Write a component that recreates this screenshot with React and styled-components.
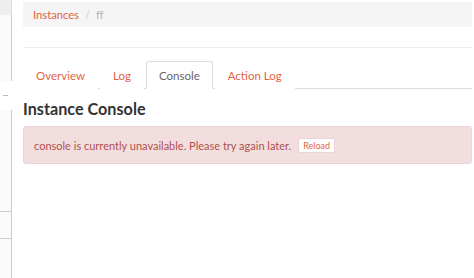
import React from "react";
import styled, { createGlobalStyle } from "styled-components";

const Global = createGlobalStyle`
  html, body {
    margin: 0;
    padding: 0;
    background: #fff;
  }
  body {
    font-family: Lato, "Noto Sans", sans-serif;
    font-size: 11px;
    color: #333;
  }
`;

const Page = styled.div`
  display: flex;
  width: 474px;
  height: 278px;
  overflow: hidden;
`;

const Side = styled.div`
  width: 12px;
  flex: none;
  display: flex;
  flex-direction: column;
`;

const SideTop = styled.div`
  height: 15px;
  background: #eee;
  border-right: 1px solid #ddd;
`;

const SidePanel = styled.div`
  height: ${p => p.h}px;
  background: #fafafa;
  border-right: 1px solid #ccc;
  flex: ${p => (p.grow ? 1 : "none")};
  display: flex;
  flex-direction: column;
`;

const SideGap = styled.div`
  height: 29px;
  display: flex;
  align-items: center;
  padding-left: 3px;
  &::before {
    content: "";
    width: 5px;
    height: 1px;
    background: #bbb;
  }
`;

const SideRule = styled.div`
  height: ${p => p.h}px;
  border-bottom: 1px solid #ccc;
`;

const Main = styled.div`
  flex: 1;
  padding: 2px 2px 0 11px;
  display: flex;
  flex-direction: column;
`;

const Crumbs = styled.ol`
  margin: 0;
  list-style: none;
  height: 25px;
  padding: 0 10px;
  background: #f5f5f5;
  display: flex;
  align-items: center;
  gap: 6px;
  font-size: 11.2px;
`;

const Crumb = styled.li`
  color: ${p => (p.active ? "#b5b5b5" : "#e2643e")};
`;

const Sep = styled.li`
  color: #d0d0d0;
`;

const Rule = styled.hr`
  margin: 20px 0 13px;
  border: 0;
  border-top: 1px solid #eee;
`;

const Tabs = styled.ul`
  margin: 0;
  padding: 0;
  list-style: none;
  display: flex;
  border-bottom: 1px solid #ddd;
  font-size: 11.5px;
`;

const Tab = styled.li`
  height: 26px;
  padding: 0 12px;
  margin-right: 2px;
  display: flex;
  align-items: center;
  margin-bottom: -1px;
  border: 1px solid ${p => (p.active ? "#ddd" : "transparent")};
  border-bottom-color: ${p => (p.active ? "#fff" : "transparent")};
  border-radius: 3px 3px 0 0;
  background: #fff;
  color: ${p => (p.active ? "#666" : "#e2643e")};
`;

const Title = styled.h3`
  margin: 9px 0 6px;
  font-size: 16.2px;
  font-weight: 700;
  color: #333;
  line-height: 22px;
`;

const Alert = styled.div`
  height: 38px;
  box-sizing: border-box;
  padding: 0 10px;
  background: #f2dede;
  border: 1px solid #ebd3d6;
  border-radius: 3px;
  color: #b0514e;
  display: flex;
  align-items: center;
  gap: 7px;
`;

const Reload = styled.button`
  font: inherit;
  font-size: 9px;
  height: 15px;
  padding: 0 4px;
  background: #fff;
  border: 1px solid #ebd3d6;
  border-radius: 2px;
  color: #e2643e;
  display: flex;
  align-items: center;
`;

export default function App() {
  return (
    <Page>
      <Global />
      <Side>
        <SideTop />
        <SidePanel h={66} />
        <SideGap />
        <SidePanel grow>
          <SideRule h={101} />
          <SideRule h={26} />
        </SidePanel>
      </Side>
      <Main>
        <Crumbs>
          <Crumb>Instances</Crumb>
          <Sep>/</Sep>
          <Crumb active>ff</Crumb>
        </Crumbs>
        <Rule />
        <Tabs>
          <Tab>Overview</Tab>
          <Tab>Log</Tab>
          <Tab active>Console</Tab>
          <Tab>Action Log</Tab>
        </Tabs>
        <Title>Instance Console</Title>
        <Alert>
          console is currently unavailable. Please try again later.
          <Reload>Reload</Reload>
        </Alert>
      </Main>
    </Page>
  );
}
